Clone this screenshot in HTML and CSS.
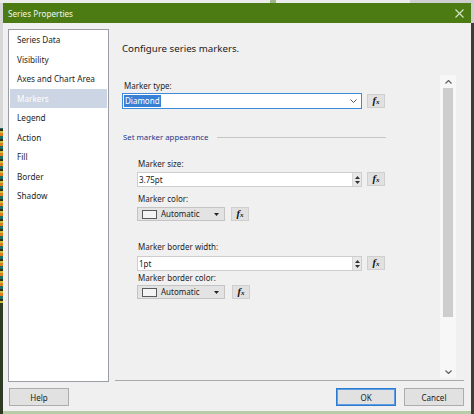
FILE: index.html
```html
<!DOCTYPE html>
<html>
<head>
<meta charset="utf-8">
<link rel="stylesheet" href="styles.css">
</head>
<body>
<div class="desk">
  <div class="strip-top"></div>
  <div class="desk-row">
    <div class="strip-left"></div>
    <div class="dialog">
      <div class="titlebar">
        <span class="title">Series Properties</span>
        <svg class="close" width="9" height="9" viewBox="0 0 9 9"><path d="M0.5 0.5 L8.5 8.5 M8.5 0.5 L0.5 8.5" stroke="#d6e6c6" stroke-width="1.1" fill="none"/></svg>
      </div>
      <div class="body">
        <div class="main">
          <ul class="nav">
            <li class="nav-item">Series Data</li>
            <li class="nav-item">Visibility</li>
            <li class="nav-item">Axes and Chart Area</li>
            <li class="nav-item nav-item-active">Markers</li>
            <li class="nav-item">Legend</li>
            <li class="nav-item">Action</li>
            <li class="nav-item">Fill</li>
            <li class="nav-item">Border</li>
            <li class="nav-item">Shadow</li>
          </ul>
          <div class="panel">
            <h1 class="heading">Configure series markers.</h1>
            <div class="scroll">
              <div class="form">
                <div class="label label-type">Marker type:</div>
                <div class="row row-type">
                  <div class="select">
                    <span class="select-text">Diamond</span>
                    <svg class="chev" width="7" height="4" viewBox="0 0 7 4"><path d="M0.5 0.5 L3.5 3.5 L6.5 0.5" stroke="#555" stroke-width="1" fill="none"/></svg>
                  </div>
                  <div class="fx"><span class="fx-f">f</span><span class="fx-x">x</span></div>
                </div>
                <div class="section">
                  <span class="section-title">Set marker appearance</span>
                  <span class="section-line"></span>
                </div>
                <div class="group">
                  <div class="label label-size">Marker size:</div>
                  <div class="row row-size">
                    <div class="input">
                      <span class="input-text">3.75pt</span>
                      <div class="spin">
                        <svg width="5" height="3" viewBox="0 0 5 3"><path d="M0 3 L2.5 0 L5 3 Z" fill="#333"/></svg>
                        <svg width="5" height="3" viewBox="0 0 5 3"><path d="M0 0 L2.5 3 L5 0 Z" fill="#333"/></svg>
                      </div>
                    </div>
                    <div class="fx"><span class="fx-f">f</span><span class="fx-x">x</span></div>
                  </div>
                  <div class="label label-color">Marker color:</div>
                  <div class="row row-color">
                    <div class="color-select">
                      <span class="swatch"></span>
                      <span class="color-text">Automatic</span>
                      <svg class="caret" width="5" height="3" viewBox="0 0 5 3"><path d="M0 0 L2.5 3 L5 0 Z" fill="#222"/></svg>
                    </div>
                    <div class="fx"><span class="fx-f">f</span><span class="fx-x">x</span></div>
                  </div>
                  <div class="label label-bwidth">Marker border width:</div>
                  <div class="row row-bwidth">
                    <div class="input">
                      <span class="input-text">1pt</span>
                      <div class="spin">
                        <svg width="5" height="3" viewBox="0 0 5 3"><path d="M0 3 L2.5 0 L5 3 Z" fill="#333"/></svg>
                        <svg width="5" height="3" viewBox="0 0 5 3"><path d="M0 0 L2.5 3 L5 0 Z" fill="#333"/></svg>
                      </div>
                    </div>
                    <div class="fx"><span class="fx-f">f</span><span class="fx-x">x</span></div>
                  </div>
                  <div class="label label-bcolor">Marker border color:</div>
                  <div class="row row-bcolor">
                    <div class="color-select">
                      <span class="swatch"></span>
                      <span class="color-text">Automatic</span>
                      <svg class="caret" width="5" height="3" viewBox="0 0 5 3"><path d="M0 0 L2.5 3 L5 0 Z" fill="#222"/></svg>
                    </div>
                    <div class="fx"><span class="fx-f">f</span><span class="fx-x">x</span></div>
                  </div>
                </div>
              </div>
              <div class="scrollbar">
                <div class="sb-btn"><svg width="7" height="4" viewBox="0 0 7 4"><path d="M0.5 3.5 L3.5 0.5 L6.5 3.5" stroke="#606060" stroke-width="1.2" fill="none"/></svg></div>
                <div class="thumb"></div>
                <div class="sb-fill"></div>
                <div class="sb-btn"><svg width="7" height="4" viewBox="0 0 7 4"><path d="M0.5 0.5 L3.5 3.5 L6.5 0.5" stroke="#606060" stroke-width="1.2" fill="none"/></svg></div>
              </div>
            </div>
          </div>
        </div>
        <div class="footer">
          <button class="btn btn-help">Help</button>
          <span class="spacer"></span>
          <button class="btn btn-ok">OK</button>
          <button class="btn">Cancel</button>
        </div>
      </div>
    </div>
    <div class="strip-right"></div>
  </div>
</div>
</body>
</html>
```

FILE: styles.css
```css
* { box-sizing: border-box; }
html, body { margin: 0; padding: 0; }
body {
  width: 474px;
  height: 414px;
  overflow: hidden;
  font-family: "Noto Sans", "Open Sans", sans-serif;
  color: #1b1b1b;
  background: #e4e4e4;
}
.desk { width: 474px; height: 414px; display: flex; flex-direction: column; }
.strip-top {
  height: 3px;
  background: linear-gradient(to right, #ececec 0 270px, #9fb88a 270px 276px, #ececec 276px 410px, #cfcfcf 410px 474px);
}
.desk-row { display: flex; flex: 1; }
.strip-left {
  width: 3px;
  background:
    linear-gradient(to bottom, #d8d8d8 0 125px, transparent 125px 300px, #2f3a22 300px),
    repeating-linear-gradient(to bottom, #e07b1e 0 3px, #1a6f63 3px 6px, #2e2e1a 6px 8px, #c7c23a 8px 10px);
}
.strip-right {
  width: 3px;
  background: linear-gradient(to bottom, #cfcfcf 0 20px, #3d3d35 20px);
}
.dialog {
  width: 468px;
  display: flex;
  flex-direction: column;
  background: #f0f0f0;
  border-bottom: 3px solid #b9cca8;
}
.titlebar {
  height: 20px;
  background: #4c7b14;
  display: flex;
  align-items: center;
  padding: 0 7px 0 5px;
}
.title { flex: 1; color: #f2f6ee; font-size: 8.2px; }
.close { display: block; }
.body {
  flex: 1;
  display: flex;
  flex-direction: column;
  padding: 6px 7px 0 5px;
}
.main { display: flex; height: 353px; gap: 6px; }
.nav {
  width: 101px;
  margin: 0;
  padding: 0 1px;
  list-style: none;
  background: #ffffff;
  border: 1px solid #9a9da3;
}
.nav-item {
  height: 19.5px;
  line-height: 19.5px;
  padding-left: 7px;
  font-size: 8.2px;
  color: #1e1e1e;
  white-space: nowrap;
}
.nav-item-active { background: #cbd5e3; color: #ffffff; }
.panel {
  flex: 1;
  height: 352px;
  display: flex;
  flex-direction: column;
  border-bottom: 1px solid #a9a9a9;
}
.heading {
  margin: 13px 0 0 7px;
  font-size: 9.7px;
  line-height: 14px;
  font-weight: normal;
  color: #1a1a1a;
}
.scroll { display: flex; margin-top: 19px; height: 303px; }
.form { flex: 1; display: flex; flex-direction: column; }
.label { font-size: 8px; line-height: 12px; color: #1e1e1e; white-space: nowrap; }
.label-type { margin: 5px 0 0 9px; }
.row { display: flex; align-items: flex-start; }
.row-type { margin: 1px 0 0 7px; gap: 5px; }
.select {
  width: 240px;
  height: 16px;
  background: #ffffff;
  border: 1px solid #3c8ad8;
  display: flex;
  align-items: center;
  padding: 0 4px 0 1px;
}
.select-text {
  flex: 0 0 auto;
  background: #3a7fd6;
  color: #ffffff;
  font-size: 8px;
  line-height: 12px;
  padding: 0 1px;
}
.chev { margin-left: auto; display: block; }
.fx {
  width: 18px;
  height: 14px;
  margin-top: 1px;
  background: #e1e1e1;
  border: 1px solid #cfcfcf;
  display: flex;
  align-items: center;
  justify-content: center;
  font-family: "Liberation Serif", serif;
  font-style: italic;
  font-weight: bold;
  color: #111;
  line-height: 1;
}
.fx-f { font-size: 10.5px; }
.fx-x { font-size: 7px; margin-top: 3px; }
.section {
  display: flex;
  align-items: center;
  margin: 22px 54px 0 8px;
  height: 12px;
}
.section-title { font-size: 7.8px; line-height: 12px; color: #23398c; white-space: nowrap; }
.section-line { flex: 1; height: 1px; margin-left: 9px; background: #c6c6c6; }
.group { display: flex; flex-direction: column; margin-left: 22px; }
.group .label { margin-left: 1px; }
.label-size { margin-top: 15px; }
.row-size { margin-top: 2px; gap: 5px; }
.label-color { margin-top: 6px; }
.row-color { margin-top: 2px; gap: 6px; }
.label-bwidth { margin-top: 20px; }
.row-bwidth { margin-top: 3px; gap: 5px; }
.label-bcolor { margin-top: 1px; }
.row-bcolor { margin-top: 1px; gap: 7px; }
.row-color .fx, .row-bcolor .fx { margin-top: 0; }
.row-size .fx, .row-bwidth .fx { margin-top: 0; }
.input {
  width: 225px;
  height: 15px;
  background: #ffffff;
  border: 1px solid #cdcdcd;
  display: flex;
  align-items: center;
  padding-left: 1px;
}
.input-text { flex: 1; font-size: 8px; line-height: 12px; }
.spin {
  width: 9px;
  height: 13px;
  background: #e8e8e8;
  border-left: 1px solid #d8d8d8;
  display: flex;
  flex-direction: column;
  align-items: center;
  justify-content: center;
  gap: 2px;
}
.spin svg { display: block; }
.color-select {
  width: 88px;
  height: 14px;
  background: #e3e3e3;
  border: 1px solid #c4c4c4;
  display: flex;
  align-items: center;
  padding: 0 5px 0 4px;
}
.swatch {
  width: 15px;
  height: 9px;
  border: 1px solid #5a5a5a;
  background: #f4f4f4;
  flex: 0 0 auto;
}
.color-text { margin-left: 4px; font-size: 8px; line-height: 12px; flex: 1; color: #222; }
.caret { display: block; }
.scrollbar {
  width: 16px;
  margin-right: 8px;
  background: #f7f7f7;
  display: flex;
  flex-direction: column;
  align-items: center;
}
.sb-btn { height: 13px; display: flex; align-items: center; justify-content: center; width: 100%; }
.sb-btn svg { display: block; }
.thumb { width: 10px; height: 229px; background: #cdcdcd; }
.sb-fill { flex: 1; }
.footer { display: flex; align-items: flex-start; padding-top: 6px; gap: 8px; }
.spacer { flex: 1; }
.btn {
  width: 60px;
  height: 18px;
  padding: 0;
  background: #e1e1e1;
  border: 1px solid #adadad;
  font-family: "Noto Sans", "Open Sans", sans-serif;
  font-size: 8px;
  color: #1b1b1b;
}
.btn-help { margin-left: 1px; }
.btn-ok { border: 1px solid #2b7bd0; box-shadow: inset 0 0 0 1px #5e9be0; }
```
